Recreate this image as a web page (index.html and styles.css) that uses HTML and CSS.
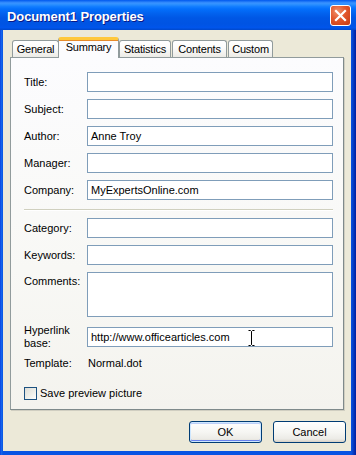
FILE: index.html
```html
<!DOCTYPE html>
<html>
<head>
<meta charset="utf-8">
<link rel="stylesheet" href="styles.css">
</head>
<body>
<div class="window">
  <div class="titlebar">
    <span class="title">Document1 Properties</span>
    <span class="close">
      <svg width="21" height="21" viewBox="0 0 21 21"><path d="M6 6 L15 15 M15 6 L6 15" stroke="#fff" stroke-width="2.2" stroke-linecap="square"/></svg>
    </span>
  </div>
  <div class="client">
    <div class="tabs">
      <div class="tab t-general">General</div>
      <div class="tab selected t-summary">Summary</div>
      <div class="tab t-stats">Statistics</div>
      <div class="tab t-contents">Contents</div>
      <div class="tab t-custom">Custom</div>
    </div>
    <div class="panel">
      <div class="fields">
        <span class="lbl">Title:</span><div class="input"></div>
        <span class="lbl">Subject:</span><div class="input"></div>
        <span class="lbl">Author:</span><div class="input">Anne Troy</div>
        <span class="lbl">Manager:</span><div class="input"></div>
        <span class="lbl">Company:</span><div class="input">MyExpertsOnline.com</div>
      </div>
      <div class="sep"></div>
      <div class="fields">
        <span class="lbl">Category:</span><div class="input"></div>
        <span class="lbl">Keywords:</span><div class="input"></div>
        <span class="lbl lbl-top">Comments:</span><div class="input area"></div>
        <span class="lbl">Hyperlink<br>base:</span><div class="input link">http://www.officearticles.com<svg class="ibeam" width="7" height="16" viewBox="0 0 7 16"><path d="M0.5 0.5 H2.5 L3.5 1.5 L4.5 0.5 H6.5 M3.5 1.5 V14.5 M0.5 15.5 H2.5 L3.5 14.5 L4.5 15.5 H6.5" stroke="#000" stroke-width="1" fill="none"/></svg></div>
        <span class="lbl">Template:</span><span class="value">Normal.dot</span>
      </div>
      <label class="check"><span class="box"></span>Save preview picture</label>
    </div>
    <div class="buttons">
      <div class="btn default">OK</div>
      <div class="btn">Cancel</div>
    </div>
  </div>
</div>
</body>
</html>
```

FILE: styles.css
```css
* { box-sizing: border-box; }
html, body { margin: 0; padding: 0; }
body {
  width: 356px;
  height: 455px;
  overflow: hidden;
  font-family: "Liberation Sans", Arial, sans-serif;
  font-size: 11px;
  color: #000;
  background: #0a246a;
}
.window {
  width: 356px;
  height: 455px;
  display: flex;
  flex-direction: column;
  background: linear-gradient(90deg, #0831d9 0, #166aee 1px, #0854e3 3px, #0854e3 351px, #0840c8 353px, #001ea0 356px);
}
.titlebar {
  height: 30px;
  flex: none;
  display: flex;
  align-items: center;
  justify-content: space-between;
  padding: 0 5px 0 7px;
  background: linear-gradient(180deg, #0058ee 0%, #3a93ff 10%, #288eff 16%, #127dff 22%, #036ffc 30%, #0262ee 45%, #0057e5 60%, #0054e3 80%, #0055eb 92%, #0048cc 100%);
}
.title {
  color: #fff;
  font-weight: bold;
  font-size: 13px;
  font-family: "Liberation Sans", Arial, sans-serif;
  text-shadow: 1px 1px 0 #0a1885;
  letter-spacing: -0.1px;
  margin-top: 2px;
}
.close {
  width: 21px;
  height: 21px;
  margin-top: 1px;
  border: 1px solid #fff;
  border-radius: 3px;
  background: radial-gradient(circle at 35% 30%, #f0916c 0%, #e2572c 45%, #c63a12 100%);
  display: flex;
  align-items: center;
  justify-content: center;
}
.close svg { display: block; margin: -1px; }
.client {
  flex: 1;
  margin: 0 5px 4px 3px;
  background: #ece9d8;
  display: flex;
  flex-direction: column;
}
.tabs {
  display: flex;
  align-items: flex-end;
  height: 20px;
  margin: 7px 0 0 9px;
  position: relative;
  z-index: 1;
}
.tab {
  height: 17px;
  padding: 0;
  text-align: center;
  margin-right: 1px;
  line-height: 16px;
  border: 1px solid #919b9c;
  border-bottom: none;
  border-radius: 3px 3px 0 0;
  background: linear-gradient(180deg, #ffffff 0%, #fcfcfb 40%, #ecebe6 100%);
  white-space: nowrap;
  letter-spacing: -0.2px;
}
.t-general { width: 47px; }
.t-summary { width: 61px; }
.t-stats { width: 52px; }
.t-contents { width: 55px; }
.t-custom { width: 45px; }
.tab.selected {
  height: 21px;
  margin: 0 0 -1px -2px;
  line-height: 15px;
  border-top: 3px solid #ffc83c;
  border-radius: 3px 3px 0 0;
  background: #fcfcfe;
  box-shadow: inset 0 1px 0 #e68b2c;
  position: relative;
}
.panel {
  margin-left: 7px;
  width: 334px;
  height: 353px;
  border: 1px solid #919b9c;
  border-right-color: #7f8a8b;
  border-bottom-color: #7f8a8b;
  box-shadow: 1px 1px 0 #d0cec1;
  background: linear-gradient(180deg, #fcfcfe 0%, #f8f8f5 60%, #f4f3ee 100%);
  padding: 14px 10px 0 13px;
  display: flex;
  flex-direction: column;
}
.fields {
  display: grid;
  grid-template-columns: 63px 1fr;
  row-gap: 7px;
  align-items: center;
}
.lbl { line-height: 13px; }
.lbl-top { align-self: start; padding-top: 3px; }
.input {
  height: 20px;
  border: 1px solid #7f9db9;
  background: #fff;
  padding: 0 3px;
  line-height: 18px;
  white-space: nowrap;
  position: relative;
}
.input.area { height: 45px; }
.ibeam { position: absolute; left: 160px; top: 2px; }
.value { line-height: 13px; padding-left: 1px; }
.sep {
  height: 2px;
  margin: 9px 0 7px;
  border-top: 1px solid #d0d0bf;
  border-bottom: 1px solid #fff;
}
.check {
  display: flex;
  align-items: center;
  gap: 3px;
  margin-top: 17px;
  line-height: 13px;
}
.box {
  width: 13px;
  height: 13px;
  border: 1px solid #1c5180;
  background: linear-gradient(135deg, #dcdcd7 0%, #f0f0ea 60%, #ffffff 100%);
}
.buttons {
  display: flex;
  justify-content: flex-end;
  gap: 11px;
  margin: 11px 5px 0 0;
}
.btn {
  width: 73px;
  height: 22px;
  border: 1px solid #003c74;
  border-radius: 3px;
  background: linear-gradient(180deg, #ffffff 0%, #f6f6f3 50%, #ecebe6 85%, #d6d0c5 100%);
  display: flex;
  align-items: center;
  justify-content: center;
  line-height: 13px;
}
.btn.default {
  box-shadow: inset 0 0 0 1px #cee7ff, inset 0 -1px 0 1px #6982ee, inset 0 1px 0 1px #bccff9;
}
```
